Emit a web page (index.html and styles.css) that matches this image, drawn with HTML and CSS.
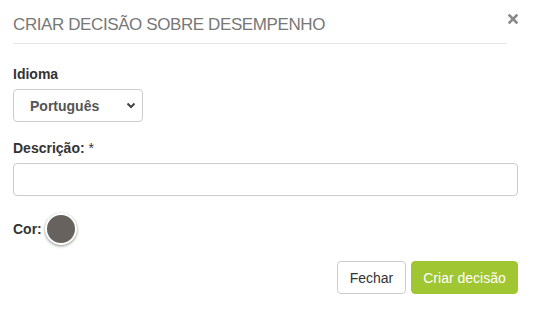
FILE: index.html
```html
<!DOCTYPE html>
<html>
<head>
<meta charset="utf-8">
<link rel="stylesheet" href="styles.css">
</head>
<body>
<div class="modal">
  <div class="header">
    <h1 class="title">CRIAR DECISÃO SOBRE DESEMPENHO</h1>
    <svg class="close" width="10" height="10" viewBox="0 0 10 10"><path d="M1.5 1.5 L8.5 8.5 M8.5 1.5 L1.5 8.5" stroke="#8a8a8a" stroke-width="2.6" stroke-linecap="square"/></svg>
  </div>
  <div class="body">
    <div class="field">
      <label class="label">Idioma</label>
      <div class="select">
        <span class="select-text">Português</span>
        <svg class="chev" width="10" height="7" viewBox="0 0 10 7"><path d="M1.5 1.5 L5 5 L8.5 1.5" fill="none" stroke="#444" stroke-width="2"/></svg>
      </div>
    </div>
    <div class="field">
      <label class="label">Descrição: <span class="req">*</span></label>
      <div class="input"></div>
    </div>
    <div class="color-row">
      <label class="label">Cor:</label>
      <span class="swatch"></span>
    </div>
  </div>
  <div class="footer">
    <button class="btn btn-default">Fechar</button>
    <button class="btn btn-primary">Criar decisão</button>
  </div>
</div>
</body>
</html>
```
FILE: styles.css
```css
* { box-sizing: border-box; }
html, body { margin: 0; padding: 0; background: #fff; }
body { font-family: "Liberation Sans", Arial, sans-serif; color: #333; }
.modal { width: 536px; height: 317px; padding: 0 18px 0 13px; }
.header { display: flex; justify-content: space-between; align-items: flex-start; padding-top: 15px; }
.title { margin: 0; font-size: 17px; letter-spacing: -0.4px; font-weight: normal; color: #777; line-height: 20px; padding-bottom: 8px; border-bottom: 1px solid #e5e5e5; flex: 0 0 493px; }
.close { display: block; margin-top: -1px; }
.body { padding-top: 22px; display: flex; flex-direction: column; }
.field { margin-bottom: 18px; }
.label { display: block; font-weight: bold; font-size: 14px; line-height: 16px; color: #333; }
.req { font-weight: normal; }
.select { margin-top: 7px; width: 130px; height: 33px; border: 1px solid #ccc; border-radius: 4px; display: flex; align-items: center; justify-content: space-between; padding: 0 6px 0 16px; }
.select-text { font-weight: bold; font-size: 14px; color: #555; }
.input { margin-top: 7px; width: 505px; height: 33px; border: 1px solid #ccc; border-radius: 4px; }
.color-row { display: flex; align-items: center; gap: 3px; margin-top: -1px; }
.color-row .label { display: inline; }
.swatch { width: 32px; height: 32px; border-radius: 50%; background: #67625d; border: 2px solid #fff; box-shadow: 0 1px 3px rgba(0,0,0,0.45); }
.footer { display: flex; justify-content: flex-end; gap: 5px; margin-top: 16px; }
.btn { height: 33px; font-family: "Liberation Sans", Arial, sans-serif; font-size: 14px; border-radius: 4px; padding: 0; white-space: nowrap; }
.btn-default { background: #fff; border: 1px solid #ccc; color: #333; width: 69px; }
.btn-primary { background: #a0c632; border: 1px solid #a0c632; color: #fff; width: 107px; }
```
